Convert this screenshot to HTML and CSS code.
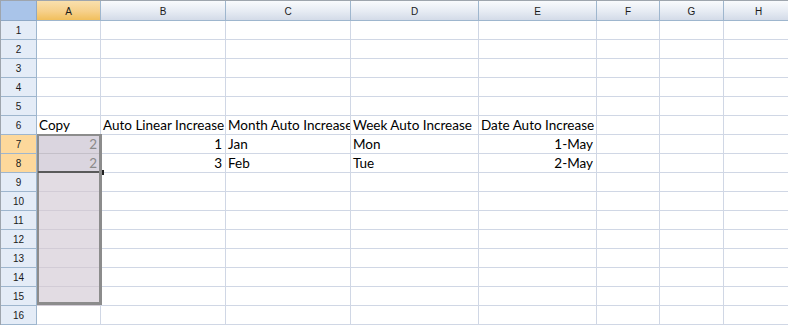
FILE: index.html
```html
<!DOCTYPE html>
<html>
<head>
<meta charset="utf-8">
<link rel="stylesheet" href="styles.css">
</head>
<body>
<div class="sheet">
  <div class="corner"></div>
  <div class="ch sel">A</div><div class="ch">B</div><div class="ch">C</div><div class="ch">D</div><div class="ch">E</div><div class="ch">F</div><div class="ch">G</div><div class="ch">H</div>

  <div class="rh">1</div><div class="c"></div><div class="c"></div><div class="c"></div><div class="c"></div><div class="c"></div><div class="c"></div><div class="c"></div><div class="c"></div>
  <div class="rh">2</div><div class="c"></div><div class="c"></div><div class="c"></div><div class="c"></div><div class="c"></div><div class="c"></div><div class="c"></div><div class="c"></div>
  <div class="rh">3</div><div class="c"></div><div class="c"></div><div class="c"></div><div class="c"></div><div class="c"></div><div class="c"></div><div class="c"></div><div class="c"></div>
  <div class="rh">4</div><div class="c"></div><div class="c"></div><div class="c"></div><div class="c"></div><div class="c"></div><div class="c"></div><div class="c"></div><div class="c"></div>
  <div class="rh">5</div><div class="c"></div><div class="c"></div><div class="c"></div><div class="c"></div><div class="c"></div><div class="c"></div><div class="c"></div><div class="c"></div>
  <div class="rh">6</div><div class="c">Copy</div><div class="c">Auto Linear Increase</div><div class="c">Month Auto Increase</div><div class="c">Week Auto Increase</div><div class="c">Date Auto Increase</div><div class="c"></div><div class="c"></div><div class="c"></div>
  <div class="rh sel">7</div><div class="c s1 num dim">2</div><div class="c num">1</div><div class="c">Jan</div><div class="c">Mon</div><div class="c num">1-May</div><div class="c"></div><div class="c"></div><div class="c"></div>
  <div class="rh sel">8</div><div class="c s1 num dim">2</div><div class="c num">3</div><div class="c">Feb</div><div class="c">Tue</div><div class="c num">2-May</div><div class="c"></div><div class="c"></div><div class="c"></div>
  <div class="rh">9</div><div class="c s2"></div><div class="c"></div><div class="c"></div><div class="c"></div><div class="c"></div><div class="c"></div><div class="c"></div><div class="c"></div>
  <div class="rh">10</div><div class="c s2"></div><div class="c"></div><div class="c"></div><div class="c"></div><div class="c"></div><div class="c"></div><div class="c"></div><div class="c"></div>
  <div class="rh">11</div><div class="c s2"></div><div class="c"></div><div class="c"></div><div class="c"></div><div class="c"></div><div class="c"></div><div class="c"></div><div class="c"></div>
  <div class="rh">12</div><div class="c s2"></div><div class="c"></div><div class="c"></div><div class="c"></div><div class="c"></div><div class="c"></div><div class="c"></div><div class="c"></div>
  <div class="rh">13</div><div class="c s2"></div><div class="c"></div><div class="c"></div><div class="c"></div><div class="c"></div><div class="c"></div><div class="c"></div><div class="c"></div>
  <div class="rh">14</div><div class="c s2"></div><div class="c"></div><div class="c"></div><div class="c"></div><div class="c"></div><div class="c"></div><div class="c"></div><div class="c"></div>
  <div class="rh">15</div><div class="c s2"></div><div class="c"></div><div class="c"></div><div class="c"></div><div class="c"></div><div class="c"></div><div class="c"></div><div class="c"></div>
  <div class="rh">16</div><div class="c"></div><div class="c"></div><div class="c"></div><div class="c"></div><div class="c"></div><div class="c"></div><div class="c"></div><div class="c"></div>

  <div class="selbox"></div>
  <div class="fillbar"></div>
  <div class="handle"></div>
</div>
</body>
</html>
```
FILE: styles.css
```css
html, body {
  margin: 0;
  padding: 0;
  background: #ffffff;
  overflow: hidden;
}
.sheet {
  position: relative;
  display: grid;
  grid-template-columns: 36px 64px 125px 125px 128px 118px 63px 64px 70px;
  grid-template-rows: 20px;
  grid-auto-rows: 19px;
  width: max-content;
  border-top: 1px solid #9ea5ad;
  border-left: 1px solid #9ea5ad;
}
.sheet > div {
  box-sizing: border-box;
}
.corner {
  background: #a9c4e9;
  border-right: 1px solid #8ea8c5;
  border-bottom: 1px solid #8ea8c5;
}
.ch {
  background: linear-gradient(#f9fbfd, #e6ebf3 55%, #d3dbe8);
  border-right: 1px solid #9eb6ce;
  border-bottom: 1px solid #9eb6ce;
  font-family: "Liberation Sans", Arial, sans-serif;
  font-size: 10px;
  color: #1a1a1a;
  display: flex;
  align-items: center;
  justify-content: center;
  padding-top: 1px;
}
.ch.sel {
  background: linear-gradient(#f9e0ad, #f6d08a 55%, #f1bf5c);
}
.rh {
  background: #e4ecf7;
  border-right: 1px solid #9eb6ce;
  border-bottom: 1px solid #9eb6ce;
  font-family: "Liberation Sans", Arial, sans-serif;
  font-size: 10px;
  color: #1a1a1a;
  display: flex;
  align-items: center;
  justify-content: center;
}
.rh.sel {
  background: #fdd89b;
}
.c {
  border-right: 1px solid #d0d7e5;
  border-bottom: 1px solid #d0d7e5;
  font-family: Lato, "Liberation Sans", sans-serif;
  font-size: 13.5px;
  line-height: 18px;
  color: #000;
  padding: 0 2px 0 2px;
  white-space: nowrap;
  overflow: hidden;
}
.c.num {
  text-align: right;
  padding-right: 3px;
}
.c.dim {
  color: #8a8a8a;
}
.c.s1 {
  background: #dad5df;
  border-bottom-color: #c4c0c9;
}
.c.s2 {
  background: #e2dce3;
  border-bottom-color: #d2ccd6;
}
.selbox {
  position: absolute;
  left: 36px;
  top: 133px;
  width: 65px;
  height: 171px;
  border: 2px solid #8c8c8c;
  border-right-width: 3px;
  border-bottom-width: 3px;
  pointer-events: none;
}
.fillbar {
  position: absolute;
  left: 37px;
  top: 170px;
  width: 61px;
  height: 2px;
  background: #5a5a5a;
}
.handle {
  position: absolute;
  left: 101px;
  top: 169px;
  width: 2px;
  height: 5px;
  background: #222;
}
```
